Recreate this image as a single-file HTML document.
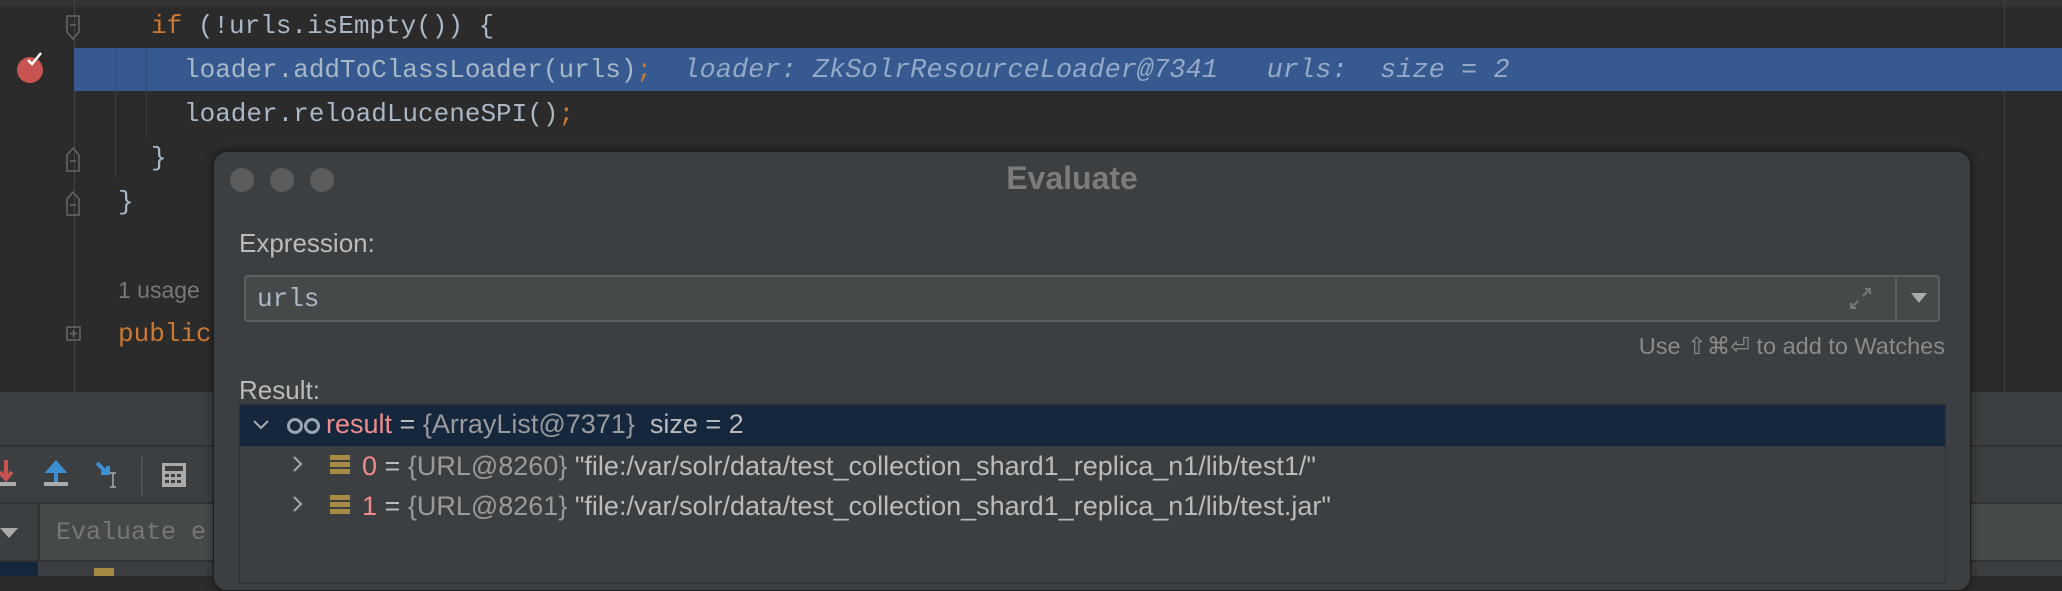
<!DOCTYPE html>
<html><head><style>
*{margin:0;padding:0;box-sizing:border-box}
body{width:2062px;height:576px;overflow:hidden;background:#2b2b2b;position:relative;font-family:"Liberation Sans",sans-serif}
.a{position:absolute}
.code{font-family:"Liberation Mono",monospace;font-size:26px;color:#a9b7c6;white-space:pre;line-height:44px}
.kw{color:#cc7832}
.ui{font-size:25px;color:#bbbbbb;white-space:pre}
</style></head><body>
<div class="a" style="left:0;top:0;width:2062px;height:7px;background:#313335"></div>
<div class="a" style="left:74px;top:0;width:1px;height:392px;background:#444"></div>
<div class="a" style="left:115px;top:48px;width:1px;height:130px;background:#3d3d3d"></div>
<div class="a" style="left:146px;top:48px;width:1px;height:90px;background:#3d3d3d"></div>
<div class="a" style="left:2004px;top:0;width:1px;height:392px;background:#3d3d3d"></div>
<div class="a" style="left:74px;top:48px;width:1988px;height:43px;background:#365a8f"></div>
<div class="a" style="left:115px;top:48px;width:1px;height:43px;background:#2f4d77"></div>
<div class="a" style="left:146px;top:48px;width:1px;height:43px;background:#2f4d77"></div>
<!-- breakpoint -->
<div class="a" style="left:17px;top:57px;width:26px;height:26px;border-radius:50%;background:#c75450"></div>
<svg class="a" style="left:24px;top:50px" width="22" height="20"><path d="M4 10l4 4 9-11" stroke="#fff" stroke-width="2.5" fill="none"/></svg>
<!-- fold icons -->
<svg class="a" style="left:64px;top:14px" width="20" height="30"><path d="M3 2h12v16l-6 7-6-7z" fill="none" stroke="#666" stroke-width="1.5"/><path d="M6 11h6" stroke="#666" stroke-width="1.5"/></svg>
<svg class="a" style="left:64px;top:143px" width="20" height="30"><path d="M3 28h12V12L9 5 3 12z" fill="none" stroke="#666" stroke-width="1.5"/><path d="M6 18h6" stroke="#666" stroke-width="1.5"/></svg>
<svg class="a" style="left:64px;top:187px" width="20" height="30"><path d="M3 28h12V12L9 5 3 12z" fill="none" stroke="#666" stroke-width="1.5"/><path d="M6 18h6" stroke="#666" stroke-width="1.5"/></svg>
<svg class="a" style="left:64px;top:324px" width="20" height="22"><rect x="3" y="3" width="13" height="13" fill="none" stroke="#666" stroke-width="1.5"/><path d="M6 9.5h7M9.5 6v7" stroke="#666" stroke-width="1.5"/></svg>
<div class="a code" style="left:151px;top:4px"><span class="kw">if</span> (!urls.isEmpty()) {</div>
<div class="a code" style="left:184px;top:48px">loader.addToClassLoader(urls)<span class="kw">;</span>  <i style="color:#95a8c6;font-size:27px">loader: ZkSolrResourceLoader@7341   urls:  size = 2</i></div>
<div class="a code" style="left:184px;top:92px">loader.reloadLuceneSPI()<span class="kw">;</span></div>
<div class="a code" style="left:151px;top:136px">}</div>
<div class="a code" style="left:118px;top:180px">}</div>
<div class="a" style="left:118px;top:277px;font-size:23px;color:#787878">1 usage</div>
<div class="a code" style="left:118px;top:312px"><span class="kw">public</span></div>
<!-- bottom panel -->
<div class="a" style="left:0;top:392px;width:2062px;height:184px;background:#3c3f41"></div>
<div class="a" style="left:0;top:445px;width:2062px;height:2px;background:#323232"></div>
<div class="a" style="left:0;top:502px;width:2062px;height:2px;background:#323232"></div>
<div class="a" style="left:40px;top:504px;width:2022px;height:56px;background:#45494a"></div>
<div class="a" style="left:38px;top:504px;width:2px;height:56px;background:#323232"></div>
<div class="a" style="left:0;top:560px;width:2062px;height:2px;background:#323232"></div>
<div class="a" style="left:0;top:562px;width:38px;height:14px;background:#14273d"></div>
<div class="a" style="left:0;top:528px;width:0;height:0;border-left:9px solid transparent;border-right:9px solid transparent;border-top:10px solid #aaa"></div>
<div class="a code" style="left:56px;top:511px;font-size:25px;color:#777">Evaluate e</div>
<div class="a" style="left:94px;top:568px;width:20px;height:8px;background:#a58a44"></div>
<svg class="a" style="left:0;top:455px" width="200" height="40"><path d="M6 5v18M0 17l6 7 6-7" stroke="#c75450" stroke-width="4" fill="none"/><rect x="0" y="27" width="16" height="4" fill="#aaa"/><path d="M56 27V9M49 16l7-8 7 8z" stroke="#3d8fd1" stroke-width="4" fill="#3d8fd1"/><rect x="44" y="27" width="24" height="4" fill="#aaa"/><path d="M97 8l10 10M101 18h7v-7" stroke="#3d8fd1" stroke-width="4" fill="none"/><path d="M113 18v14M110 18h6M110 32h6" stroke="#aaa" stroke-width="1.5"/><rect x="141" y="2" width="1.5" height="38" fill="#555"/><rect x="162" y="8" width="24" height="24" fill="#aaa"/><rect x="165" y="11" width="18" height="5" fill="#3c3f41"/><g fill="#3c3f41"><rect x="165" y="19" width="4" height="3"/><rect x="171" y="19" width="4" height="3"/><rect x="177" y="19" width="4" height="3"/><rect x="165" y="25" width="4" height="3"/><rect x="171" y="25" width="4" height="3"/><rect x="177" y="25" width="4" height="3"/></g></svg>
<!-- dialog -->
<div class="a" style="left:213px;top:151px;width:1758px;height:440px;background:#3c3f41;border:1px solid #1e1e1e;border-radius:14px;box-shadow:0 0 8px rgba(0,0,0,.5)"></div>
<div class="a" style="left:230px;top:168px;width:24px;height:24px;border-radius:50%;background:#5a5c5e"></div>
<div class="a" style="left:270px;top:168px;width:24px;height:24px;border-radius:50%;background:#5a5c5e"></div>
<div class="a" style="left:310px;top:168px;width:24px;height:24px;border-radius:50%;background:#5a5c5e"></div>
<div class="a" style="left:0;width:2062px;top:160px;text-align:center;padding-left:82px;font-size:32px;font-weight:bold;color:#7c7c7c">Evaluate</div>
<div class="a ui" style="left:239px;top:228px;font-size:26px">Expression:</div>
<div class="a" style="left:244px;top:275px;width:1696px;height:47px;background:#45494a;border:2px solid #5e6162;border-radius:4px"></div>
<div class="a" style="left:1895px;top:277px;width:2px;height:43px;background:#5e6162"></div>
<div class="a" style="left:1911px;top:293px;width:0;height:0;border-left:8px solid transparent;border-right:8px solid transparent;border-top:10px solid #aaa"></div>
<svg class="a" style="left:1847px;top:285px" width="28" height="28"><path d="M16 11l7-7M18 4h5v5M11 16l-7 7M4 18v5h5" stroke="#777" stroke-width="2" fill="none"/></svg>
<div class="a code" style="left:257px;top:277px;font-size:26px">urls</div>
<div class="a ui" style="left:1000px;width:945px;text-align:right;top:332px;font-size:23.5px;color:#8a8a8a">Use ⇧⌘⏎ to add to Watches</div>
<div class="a ui" style="left:239px;top:375px;font-size:26px">Result:</div>
<div class="a" style="left:239px;top:404px;width:1707px;height:180px;border:1px solid #2f3133;background:#3c3f41"></div>
<div class="a" style="left:240px;top:405px;width:1705px;height:41px;background:#14273d"></div>
<svg class="a" style="left:250px;top:414px" width="80" height="24"><path d="M4 7l7 7 7-7" stroke="#aaa" stroke-width="2" fill="none"/><circle cx="45" cy="12" r="6.5" stroke="#9aa7b0" stroke-width="3" fill="none"/><circle cx="62" cy="12" r="6.5" stroke="#9aa7b0" stroke-width="3" fill="none"/></svg>
<div class="a ui" style="left:326px;top:409px;font-size:27px"><span style="color:#f08c8c">result</span> = <span style="color:#9a9a9a">{ArrayList@7371}</span>  size = 2</div>
<svg class="a" style="left:290px;top:455px" width="70" height="70"><path d="M4 2l7 7-7 7" stroke="#aaa" stroke-width="2" fill="none"/><path d="M4 42l7 7-7 7" stroke="#aaa" stroke-width="2" fill="none"/><g fill="#a58a44"><rect x="40" y="0" width="20" height="5"/><rect x="40" y="7" width="20" height="5"/><rect x="40" y="14" width="20" height="5"/><rect x="40" y="40" width="20" height="5"/><rect x="40" y="47" width="20" height="5"/><rect x="40" y="54" width="20" height="5"/></g></svg>
<div class="a ui" style="left:362px;top:451px;font-size:27px"><span style="color:#f08c8c">0</span> = <span style="color:#9a9a9a">{URL@8260}</span> "file:/var/solr/data/test_collection_shard1_replica_n1/lib/test1/"</div>
<div class="a ui" style="left:362px;top:491px;font-size:27px"><span style="color:#f08c8c">1</span> = <span style="color:#9a9a9a">{URL@8261}</span> "file:/var/solr/data/test_collection_shard1_replica_n1/lib/test.jar"</div>
</body></html>
